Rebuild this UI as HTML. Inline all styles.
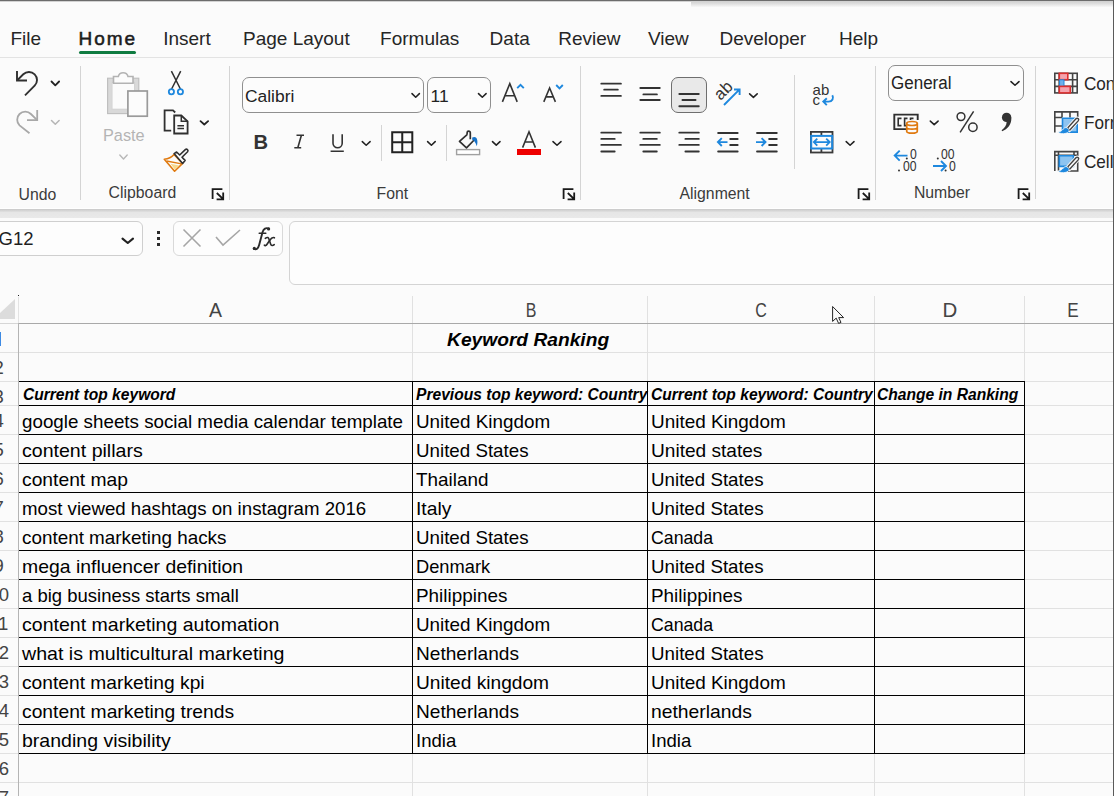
<!DOCTYPE html>
<html><head><meta charset="utf-8"><style>
html,body{margin:0;padding:0;}
body{width:1114px;height:796px;overflow:hidden;position:relative;font-family:"Liberation Sans", sans-serif;background:#fbfbfb;}
div{box-sizing:border-box}
</style></head><body>
<div style="position:absolute;left:0px;top:0px;width:1114px;height:209px;background:#fbfbfb"></div><div style="position:absolute;left:0px;top:0px;width:1114px;height:1px;background:#6c6c6c"></div><div style="position:absolute;left:0px;top:1px;width:1114px;height:1px;background:#d2d2d2"></div><div style="position:absolute;left:691px;top:1px;width:423px;height:6px;background:linear-gradient(#cfcfcf,#dcdcdc 40%,#f7f7f7)"></div><div style="position:absolute;left:10.4px;top:28.92px;font-size:19px;line-height:1;white-space:nowrap;color:#262626;font-weight:normal;font-style:normal;">File</div><div style="position:absolute;left:163.2px;top:28.92px;font-size:19px;line-height:1;white-space:nowrap;color:#262626;font-weight:normal;font-style:normal;">Insert</div><div style="position:absolute;left:243.0px;top:28.92px;font-size:19px;line-height:1;white-space:nowrap;color:#262626;font-weight:normal;font-style:normal;">Page Layout</div><div style="position:absolute;left:380.1px;top:28.92px;font-size:19px;line-height:1;white-space:nowrap;color:#262626;font-weight:normal;font-style:normal;">Formulas</div><div style="position:absolute;left:489.6px;top:28.92px;font-size:19px;line-height:1;white-space:nowrap;color:#262626;font-weight:normal;font-style:normal;">Data</div><div style="position:absolute;left:558.2px;top:28.92px;font-size:19px;line-height:1;white-space:nowrap;color:#262626;font-weight:normal;font-style:normal;">Review</div><div style="position:absolute;left:648.0px;top:28.92px;font-size:19px;line-height:1;white-space:nowrap;color:#262626;font-weight:normal;font-style:normal;">View</div><div style="position:absolute;left:719.5px;top:28.92px;font-size:19px;line-height:1;white-space:nowrap;color:#262626;font-weight:normal;font-style:normal;">Developer</div><div style="position:absolute;left:839.0px;top:28.92px;font-size:19px;line-height:1;white-space:nowrap;color:#262626;font-weight:normal;font-style:normal;">Help</div><div style="position:absolute;left:78.6px;top:28.92px;font-size:19px;line-height:1;white-space:nowrap;color:#1c1c1c;font-weight:normal;font-style:normal;letter-spacing:1.9px;-webkit-text-stroke:0.55px #1c1c1c">Home</div><div style="position:absolute;left:79px;top:51px;width:57px;height:3px;background:#107c41;border-radius:2px"></div><div style="position:absolute;left:0px;top:57px;width:1114px;height:1px;background:#e3e3e3"></div><div style="position:absolute;left:0px;top:208px;width:1114px;height:1px;background:#ffffff"></div><div style="position:absolute;left:0px;top:209px;width:1114px;height:9px;background:linear-gradient(#c9c9c9 0px,#d8d8d8 2px,#e6e6e6 3.5px,#e9e9e9 9px)"></div><div style="position:absolute;left:0px;top:218px;width:1114px;height:105px;background:#fbfbfb"></div><div style="position:absolute;left:80px;top:66px;width:1px;height:134px;background:#d4d4d4"></div><div style="position:absolute;left:229px;top:66px;width:1px;height:134px;background:#d4d4d4"></div><div style="position:absolute;left:580px;top:66px;width:1px;height:134px;background:#d4d4d4"></div><div style="position:absolute;left:875px;top:66px;width:1px;height:134px;background:#d4d4d4"></div><div style="position:absolute;left:1035px;top:66px;width:1px;height:133px;background:#d4d4d4"></div><div style="position:absolute;left:18.5px;top:186.63px;font-size:15.8px;line-height:1;white-space:nowrap;color:#3b3b3b;font-weight:normal;font-style:normal;">Undo</div><div style="position:absolute;left:108.6px;top:185.13px;font-size:15.8px;line-height:1;white-space:nowrap;color:#3b3b3b;font-weight:normal;font-style:normal;">Clipboard</div><div style="position:absolute;left:376.6px;top:185.63px;font-size:15.8px;line-height:1;white-space:nowrap;color:#3b3b3b;font-weight:normal;font-style:normal;">Font</div><div style="position:absolute;left:679.5px;top:185.63px;font-size:15.8px;line-height:1;white-space:nowrap;color:#3b3b3b;font-weight:normal;font-style:normal;">Alignment</div><div style="position:absolute;left:913.9px;top:185.33px;font-size:15.8px;line-height:1;white-space:nowrap;color:#3b3b3b;font-weight:normal;font-style:normal;">Number</div><div style="position:absolute;left:103px;top:126.90px;font-size:16.3px;line-height:1;white-space:nowrap;color:#b4b4b4;font-weight:normal;font-style:normal;">Paste</div><div style="position:absolute;left:242px;top:77px;width:182px;height:36px;background:#fcfcfc;border:1px solid #8f8f8f;border-radius:7px"></div><div style="position:absolute;left:245px;top:87.87px;font-size:17.4px;line-height:1;white-space:nowrap;color:#222;font-weight:normal;font-style:normal;">Calibri</div><div style="position:absolute;left:427px;top:77px;width:64px;height:36px;background:#fcfcfc;border:1px solid #8f8f8f;border-radius:7px"></div><div style="position:absolute;left:430.5px;top:87.87px;font-size:17.4px;line-height:1;white-space:nowrap;color:#222;font-weight:normal;font-style:normal;">11</div><div style="position:absolute;left:253.6px;top:131.70px;font-size:20.2px;line-height:1;white-space:nowrap;color:#333;font-weight:bold;font-style:normal;">B</div><div style="position:absolute;left:381px;top:125px;width:1px;height:36px;background:#d4d4d4"></div><div style="position:absolute;left:446px;top:125px;width:1px;height:36px;background:#d4d4d4"></div><div style="position:absolute;left:517px;top:149px;width:24px;height:6px;background:#ee0000"></div><div style="position:absolute;left:671px;top:77px;width:36px;height:36px;background:#e9e9e9;border:1px solid #6e6e6e;border-radius:7px"></div><div style="position:absolute;left:794px;top:75px;width:1px;height:94px;background:#d4d4d4"></div><div style="position:absolute;left:812.6px;top:81.60px;font-size:15px;line-height:1;white-space:nowrap;color:#333;font-weight:normal;font-style:normal;">ab</div><div style="position:absolute;left:812.6px;top:92.40px;font-size:15px;line-height:1;white-space:nowrap;color:#333;font-weight:normal;font-style:normal;">c</div><div style="position:absolute;left:888px;top:65px;width:136px;height:36px;background:#fcfcfc;border:1px solid #8f8f8f;border-radius:7px"></div><div style="position:absolute;left:891px;top:74.09px;font-size:18.8px;line-height:1;white-space:nowrap;color:#222;font-weight:normal;font-style:normal;transform:scaleX(0.905);transform-origin:0 0">General</div><div style="position:absolute;left:909.7px;top:147.28px;font-size:14.2px;line-height:1;white-space:nowrap;color:#333;transform:scaleX(0.86);transform-origin:0 0">0</div><div style="position:absolute;left:902.6px;top:159.48px;font-size:14.2px;line-height:1;white-space:nowrap;color:#333;transform:scaleX(0.86);transform-origin:0 0">00</div><div style="position:absolute;left:941px;top:147.28px;font-size:14.2px;line-height:1;white-space:nowrap;color:#333;transform:scaleX(0.86);transform-origin:0 0">00</div><div style="position:absolute;left:949.1px;top:159.48px;font-size:14.2px;line-height:1;white-space:nowrap;color:#333;transform:scaleX(0.86);transform-origin:0 0">0</div><div style="position:absolute;left:1084.2px;top:73.62px;font-size:19px;line-height:1;white-space:nowrap;color:#262626;font-weight:normal;font-style:normal;transform:scaleX(0.9);transform-origin:0 0">Conditional</div><div style="position:absolute;left:1084.2px;top:112.92px;font-size:19px;line-height:1;white-space:nowrap;color:#262626;font-weight:normal;font-style:normal;transform:scaleX(0.9);transform-origin:0 0">Format as</div><div style="position:absolute;left:1084.2px;top:151.52px;font-size:19px;line-height:1;white-space:nowrap;color:#262626;font-weight:normal;font-style:normal;transform:scaleX(0.9);transform-origin:0 0">Cell Styles</div><div style="position:absolute;left:-10px;top:221px;width:153px;height:35px;background:#fdfdfd;border:1px solid #cfcfcf;border-radius:6px"></div><div style="position:absolute;left:-1.5px;top:230.14px;font-size:18.5px;line-height:1;white-space:nowrap;color:#1f1f1f;font-weight:normal;font-style:normal;">G12</div><div style="position:absolute;left:156.6px;top:231.2px;width:3px;height:3px;background:#2a2a2a"></div><div style="position:absolute;left:156.6px;top:237.2px;width:3px;height:3px;background:#2a2a2a"></div><div style="position:absolute;left:156.6px;top:243.1px;width:3px;height:3px;background:#2a2a2a"></div><div style="position:absolute;left:173px;top:221px;width:110px;height:35px;background:#fdfdfd;border:1px solid #d9d9d9;border-radius:6px"></div><div style="position:absolute;left:289px;top:221px;width:840px;height:64px;background:#fdfdfd;border:1px solid #d4d4d4;border-radius:6px"></div><div style="position:absolute;left:0px;top:323px;width:1114px;height:473px;background:#fbfbfb"></div><div style="position:absolute;left:0px;top:352px;width:1114px;height:1px;background:#e1e1e1"></div><div style="position:absolute;left:0px;top:381px;width:1114px;height:1px;background:#e1e1e1"></div><div style="position:absolute;left:0px;top:405px;width:1114px;height:1px;background:#e1e1e1"></div><div style="position:absolute;left:0px;top:434px;width:1114px;height:1px;background:#e1e1e1"></div><div style="position:absolute;left:0px;top:463px;width:1114px;height:1px;background:#e1e1e1"></div><div style="position:absolute;left:0px;top:492px;width:1114px;height:1px;background:#e1e1e1"></div><div style="position:absolute;left:0px;top:521px;width:1114px;height:1px;background:#e1e1e1"></div><div style="position:absolute;left:0px;top:550px;width:1114px;height:1px;background:#e1e1e1"></div><div style="position:absolute;left:0px;top:579px;width:1114px;height:1px;background:#e1e1e1"></div><div style="position:absolute;left:0px;top:608px;width:1114px;height:1px;background:#e1e1e1"></div><div style="position:absolute;left:0px;top:637px;width:1114px;height:1px;background:#e1e1e1"></div><div style="position:absolute;left:0px;top:666px;width:1114px;height:1px;background:#e1e1e1"></div><div style="position:absolute;left:0px;top:695px;width:1114px;height:1px;background:#e1e1e1"></div><div style="position:absolute;left:0px;top:724px;width:1114px;height:1px;background:#e1e1e1"></div><div style="position:absolute;left:0px;top:753px;width:1114px;height:1px;background:#e1e1e1"></div><div style="position:absolute;left:0px;top:782px;width:1114px;height:1px;background:#e1e1e1"></div><div style="position:absolute;left:0px;top:811px;width:1114px;height:1px;background:#e1e1e1"></div><div style="position:absolute;left:412px;top:296px;width:1px;height:500px;background:#e1e1e1"></div><div style="position:absolute;left:647px;top:296px;width:1px;height:500px;background:#e1e1e1"></div><div style="position:absolute;left:874px;top:296px;width:1px;height:500px;background:#e1e1e1"></div><div style="position:absolute;left:1024px;top:296px;width:1px;height:500px;background:#e1e1e1"></div><div style="position:absolute;left:19px;top:323px;width:1095px;height:1px;background:#a9a9a9"></div><div style="position:absolute;left:0px;top:323px;width:18px;height:1px;background:#d6d6d6"></div><div style="position:absolute;left:18px;top:297px;width:1px;height:26px;background:#e3e3e3"></div><div style="position:absolute;left:18px;top:323px;width:1px;height:473px;background:#b4b4b4"></div><div style="position:absolute;left:18px;top:295px;width:1px;height:1px;background:#222"></div><div style="position:absolute;left:185.5px;width:60px;text-align:center;top:301.19px;font-size:19.5px;line-height:1;color:#444;transform:scaleX(1.0)">A</div><div style="position:absolute;left:500.6px;width:60px;text-align:center;top:301.19px;font-size:19.5px;line-height:1;color:#444;transform:scaleX(0.82)">B</div><div style="position:absolute;left:730.9px;width:60px;text-align:center;top:301.19px;font-size:19.5px;line-height:1;color:#444;transform:scaleX(0.82)">C</div><div style="position:absolute;left:920px;width:60px;text-align:center;top:301.19px;font-size:19.5px;line-height:1;color:#444;transform:scaleX(1.05)">D</div><div style="position:absolute;left:1043.4px;width:60px;text-align:center;top:301.19px;font-size:19.5px;line-height:1;color:#444;transform:scaleX(0.88)">E</div><div style="position:absolute;left:0px;top:332px;width:1.3px;height:13.6px;background:#3d8ae3"></div><div style="position:absolute;left:-41.3px;width:80px;text-align:center;top:358.74px;font-size:18.5px;line-height:1;color:#444">2</div><div style="position:absolute;left:-41.3px;width:80px;text-align:center;top:387.74px;font-size:18.5px;line-height:1;color:#444">3</div><div style="position:absolute;left:-41.3px;width:80px;text-align:center;top:411.74px;font-size:18.5px;line-height:1;color:#444">4</div><div style="position:absolute;left:-41.3px;width:80px;text-align:center;top:440.74px;font-size:18.5px;line-height:1;color:#444">5</div><div style="position:absolute;left:-41.3px;width:80px;text-align:center;top:469.74px;font-size:18.5px;line-height:1;color:#444">6</div><div style="position:absolute;left:-41.3px;width:80px;text-align:center;top:498.74px;font-size:18.5px;line-height:1;color:#444">7</div><div style="position:absolute;left:-41.3px;width:80px;text-align:center;top:527.74px;font-size:18.5px;line-height:1;color:#444">8</div><div style="position:absolute;left:-41.3px;width:80px;text-align:center;top:556.74px;font-size:18.5px;line-height:1;color:#444">9</div><div style="position:absolute;left:-41.3px;width:80px;text-align:center;top:585.74px;font-size:18.5px;line-height:1;color:#444">10</div><div style="position:absolute;left:-41.3px;width:80px;text-align:center;top:614.74px;font-size:18.5px;line-height:1;color:#444">11</div><div style="position:absolute;left:-41.3px;width:80px;text-align:center;top:643.74px;font-size:18.5px;line-height:1;color:#444">12</div><div style="position:absolute;left:-41.3px;width:80px;text-align:center;top:672.74px;font-size:18.5px;line-height:1;color:#444">13</div><div style="position:absolute;left:-41.3px;width:80px;text-align:center;top:701.74px;font-size:18.5px;line-height:1;color:#444">14</div><div style="position:absolute;left:-41.3px;width:80px;text-align:center;top:730.74px;font-size:18.5px;line-height:1;color:#444">15</div><div style="position:absolute;left:-41.3px;width:80px;text-align:center;top:759.74px;font-size:18.5px;line-height:1;color:#444">16</div><div style="position:absolute;left:-41.3px;width:80px;text-align:center;top:788.74px;font-size:18.5px;line-height:1;color:#444">17</div><div style="position:absolute;left:19px;top:381px;width:1006px;height:1px;background:#000"></div><div style="position:absolute;left:19px;top:405px;width:1006px;height:1px;background:#000"></div><div style="position:absolute;left:19px;top:434px;width:1006px;height:1px;background:#000"></div><div style="position:absolute;left:19px;top:463px;width:1006px;height:1px;background:#000"></div><div style="position:absolute;left:19px;top:492px;width:1006px;height:1px;background:#000"></div><div style="position:absolute;left:19px;top:521px;width:1006px;height:1px;background:#000"></div><div style="position:absolute;left:19px;top:550px;width:1006px;height:1px;background:#000"></div><div style="position:absolute;left:19px;top:579px;width:1006px;height:1px;background:#000"></div><div style="position:absolute;left:19px;top:608px;width:1006px;height:1px;background:#000"></div><div style="position:absolute;left:19px;top:637px;width:1006px;height:1px;background:#000"></div><div style="position:absolute;left:19px;top:666px;width:1006px;height:1px;background:#000"></div><div style="position:absolute;left:19px;top:695px;width:1006px;height:1px;background:#000"></div><div style="position:absolute;left:19px;top:724px;width:1006px;height:1px;background:#000"></div><div style="position:absolute;left:19px;top:753px;width:1006px;height:1px;background:#000"></div><div style="position:absolute;left:412px;top:381px;width:1px;height:373px;background:#000"></div><div style="position:absolute;left:647px;top:381px;width:1px;height:373px;background:#000"></div><div style="position:absolute;left:874px;top:381px;width:1px;height:373px;background:#000"></div><div style="position:absolute;left:1024px;top:381px;width:1px;height:373px;background:#000"></div><div style="position:absolute;left:410.6px;width:235px;text-align:center;top:329.75px;font-size:19.2px;line-height:1;font-weight:bold;font-style:italic;color:#000">Keyword Ranking</div><div style="position:absolute;left:22.9px;top:386.79px;font-size:15.6px;line-height:1;white-space:nowrap;color:#000;font-weight:bold;font-style:italic;">Current top keyword</div><div style="position:absolute;left:416px;top:386.79px;font-size:15.6px;line-height:1;white-space:nowrap;color:#000;font-weight:bold;font-style:italic;">Previous top keyword: Country</div><div style="position:absolute;left:651px;top:386.79px;font-size:15.6px;line-height:1;white-space:nowrap;color:#000;font-weight:bold;font-style:italic;">Current top keyword: Country</div><div style="position:absolute;left:877px;top:386.79px;font-size:15.6px;line-height:1;white-space:nowrap;color:#000;font-weight:bold;font-style:italic;">Change in Ranking</div><div style="position:absolute;left:22px;top:412.42px;font-size:19px;line-height:1;white-space:nowrap;color:#000;font-weight:normal;font-style:normal;transform:scaleX(0.9883);transform-origin:0 0">google sheets social media calendar template</div><div style="position:absolute;left:416px;top:412.42px;font-size:19px;line-height:1;white-space:nowrap;color:#000;font-weight:normal;font-style:normal;transform:scaleX(0.9926);transform-origin:0 0">United Kingdom</div><div style="position:absolute;left:651px;top:412.42px;font-size:19px;line-height:1;white-space:nowrap;color:#000;font-weight:normal;font-style:normal;transform:scaleX(0.9963);transform-origin:0 0">United Kingdom</div><div style="position:absolute;left:22px;top:441.42px;font-size:19px;line-height:1;white-space:nowrap;color:#000;font-weight:normal;font-style:normal;transform:scaleX(1.0299);transform-origin:0 0">content pillars</div><div style="position:absolute;left:416px;top:441.42px;font-size:19px;line-height:1;white-space:nowrap;color:#000;font-weight:normal;font-style:normal;transform:scaleX(0.9868);transform-origin:0 0">United States</div><div style="position:absolute;left:651px;top:441.42px;font-size:19px;line-height:1;white-space:nowrap;color:#000;font-weight:normal;font-style:normal;transform:scaleX(1.0045);transform-origin:0 0">United states</div><div style="position:absolute;left:22px;top:470.42px;font-size:19px;line-height:1;white-space:nowrap;color:#000;font-weight:normal;font-style:normal;transform:scaleX(1.0143);transform-origin:0 0">content map</div><div style="position:absolute;left:416px;top:470.42px;font-size:19px;line-height:1;white-space:nowrap;color:#000;font-weight:normal;font-style:normal;transform:scaleX(0.9932);transform-origin:0 0">Thailand</div><div style="position:absolute;left:651px;top:470.42px;font-size:19px;line-height:1;white-space:nowrap;color:#000;font-weight:normal;font-style:normal;transform:scaleX(0.9868);transform-origin:0 0">United States</div><div style="position:absolute;left:22px;top:499.42px;font-size:19px;line-height:1;white-space:nowrap;color:#000;font-weight:normal;font-style:normal;transform:scaleX(0.9815);transform-origin:0 0">most viewed hashtags on instagram 2016</div><div style="position:absolute;left:416px;top:499.42px;font-size:19px;line-height:1;white-space:nowrap;color:#000;font-weight:normal;font-style:normal;transform:scaleX(1.0143);transform-origin:0 0">Italy</div><div style="position:absolute;left:651px;top:499.42px;font-size:19px;line-height:1;white-space:nowrap;color:#000;font-weight:normal;font-style:normal;transform:scaleX(0.9868);transform-origin:0 0">United States</div><div style="position:absolute;left:22px;top:528.42px;font-size:19px;line-height:1;white-space:nowrap;color:#000;font-weight:normal;font-style:normal;transform:scaleX(0.9927);transform-origin:0 0">content marketing hacks</div><div style="position:absolute;left:416px;top:528.42px;font-size:19px;line-height:1;white-space:nowrap;color:#000;font-weight:normal;font-style:normal;transform:scaleX(0.9868);transform-origin:0 0">United States</div><div style="position:absolute;left:651px;top:528.42px;font-size:19px;line-height:1;white-space:nowrap;color:#000;font-weight:normal;font-style:normal;transform:scaleX(0.9328);transform-origin:0 0">Canada</div><div style="position:absolute;left:22px;top:557.42px;font-size:19px;line-height:1;white-space:nowrap;color:#000;font-weight:normal;font-style:normal;transform:scaleX(1.0208);transform-origin:0 0">mega influencer definition</div><div style="position:absolute;left:416px;top:557.42px;font-size:19px;line-height:1;white-space:nowrap;color:#000;font-weight:normal;font-style:normal;transform:scaleX(0.9615);transform-origin:0 0">Denmark</div><div style="position:absolute;left:651px;top:557.42px;font-size:19px;line-height:1;white-space:nowrap;color:#000;font-weight:normal;font-style:normal;transform:scaleX(0.9868);transform-origin:0 0">United States</div><div style="position:absolute;left:22px;top:586.42px;font-size:19px;line-height:1;white-space:nowrap;color:#000;font-weight:normal;font-style:normal;transform:scaleX(0.9731);transform-origin:0 0">a big business starts small</div><div style="position:absolute;left:416px;top:586.42px;font-size:19px;line-height:1;white-space:nowrap;color:#000;font-weight:normal;font-style:normal;transform:scaleX(0.9946);transform-origin:0 0">Philippines</div><div style="position:absolute;left:651px;top:586.42px;font-size:19px;line-height:1;white-space:nowrap;color:#000;font-weight:normal;font-style:normal;transform:scaleX(0.9946);transform-origin:0 0">Philippines</div><div style="position:absolute;left:22px;top:615.42px;font-size:19px;line-height:1;white-space:nowrap;color:#000;font-weight:normal;font-style:normal;transform:scaleX(1.0280);transform-origin:0 0">content marketing automation</div><div style="position:absolute;left:416px;top:615.42px;font-size:19px;line-height:1;white-space:nowrap;color:#000;font-weight:normal;font-style:normal;transform:scaleX(0.9926);transform-origin:0 0">United Kingdom</div><div style="position:absolute;left:651px;top:615.42px;font-size:19px;line-height:1;white-space:nowrap;color:#000;font-weight:normal;font-style:normal;transform:scaleX(0.9328);transform-origin:0 0">Canada</div><div style="position:absolute;left:22px;top:644.42px;font-size:19px;line-height:1;white-space:nowrap;color:#000;font-weight:normal;font-style:normal;transform:scaleX(1.0315);transform-origin:0 0">what is multicultural marketing</div><div style="position:absolute;left:416px;top:644.42px;font-size:19px;line-height:1;white-space:nowrap;color:#000;font-weight:normal;font-style:normal;transform:scaleX(1.0049);transform-origin:0 0">Netherlands</div><div style="position:absolute;left:651px;top:644.42px;font-size:19px;line-height:1;white-space:nowrap;color:#000;font-weight:normal;font-style:normal;transform:scaleX(0.9868);transform-origin:0 0">United States</div><div style="position:absolute;left:22px;top:673.42px;font-size:19px;line-height:1;white-space:nowrap;color:#000;font-weight:normal;font-style:normal;transform:scaleX(1.0110);transform-origin:0 0">content marketing kpi</div><div style="position:absolute;left:416px;top:673.42px;font-size:19px;line-height:1;white-space:nowrap;color:#000;font-weight:normal;font-style:normal;transform:scaleX(1.0076);transform-origin:0 0">United kingdom</div><div style="position:absolute;left:651px;top:673.42px;font-size:19px;line-height:1;white-space:nowrap;color:#000;font-weight:normal;font-style:normal;transform:scaleX(0.9963);transform-origin:0 0">United Kingdom</div><div style="position:absolute;left:22px;top:702.42px;font-size:19px;line-height:1;white-space:nowrap;color:#000;font-weight:normal;font-style:normal;transform:scaleX(1.0144);transform-origin:0 0">content marketing trends</div><div style="position:absolute;left:416px;top:702.42px;font-size:19px;line-height:1;white-space:nowrap;color:#000;font-weight:normal;font-style:normal;transform:scaleX(1.0049);transform-origin:0 0">Netherlands</div><div style="position:absolute;left:651px;top:702.42px;font-size:19px;line-height:1;white-space:nowrap;color:#000;font-weight:normal;font-style:normal;transform:scaleX(1.0152);transform-origin:0 0">netherlands</div><div style="position:absolute;left:22px;top:731.42px;font-size:19px;line-height:1;white-space:nowrap;color:#000;font-weight:normal;font-style:normal;transform:scaleX(1.0276);transform-origin:0 0">branding visibility</div><div style="position:absolute;left:416px;top:731.42px;font-size:19px;line-height:1;white-space:nowrap;color:#000;font-weight:normal;font-style:normal;transform:scaleX(0.9762);transform-origin:0 0">India</div><div style="position:absolute;left:651px;top:731.42px;font-size:19px;line-height:1;white-space:nowrap;color:#000;font-weight:normal;font-style:normal;transform:scaleX(0.9762);transform-origin:0 0">India</div><div style="position:absolute;left:1113px;top:0px;width:1px;height:796px;background:#5a5a5a"></div>
<svg style="position:absolute;left:0;top:0" width="1114" height="796" viewBox="0 0 1114 796"><path d="M212.6 199V189.1H222.4" fill="none" stroke="#1a1a1a" stroke-width="1.8"/><path d="M216.8 193L223.2 199.2M223.2 192.4V199.4H216.6" fill="none" stroke="#1a1a1a" stroke-width="1.8"/><path d="M563.6 199V189.1H573.4" fill="none" stroke="#1a1a1a" stroke-width="1.8"/><path d="M567.8 193L574.2 199.2M574.2 192.4V199.4H567.6" fill="none" stroke="#1a1a1a" stroke-width="1.8"/><path d="M858.6 199V189.1H868.4" fill="none" stroke="#1a1a1a" stroke-width="1.8"/><path d="M862.8 193L869.2 199.2M869.2 192.4V199.4H862.6" fill="none" stroke="#1a1a1a" stroke-width="1.8"/><path d="M1018.6 199V189.1H1028.4" fill="none" stroke="#1a1a1a" stroke-width="1.8"/><path d="M1022.8 193L1029.2 199.2M1029.2 192.4V199.4H1022.6" fill="none" stroke="#1a1a1a" stroke-width="1.8"/><g fill="none" stroke="#303030" stroke-width="1.9"><path d="M17 71V80.5H27"/><path d="M17.3 80.2L23.3 74.3A8 8 0 0 1 34.66 85.66L25 95.3"/></g><path d="M51.5 81.50L55.3 85.30L59.1 81.50" fill="none" stroke="#222" stroke-width="1.8" stroke-linecap="round" stroke-linejoin="round"/><g fill="none" stroke="#a8a8a8" stroke-width="1.8"><path d="M37.2 110V120.2H27"/><path d="M36.9 119.9L30.9 114A8 8 0 0 0 19.55 125.35L29.5 133.3"/></g><path d="M51.5 120.50L55.3 124.30L59.1 120.50" fill="none" stroke="#b5b5b5" stroke-width="1.5" stroke-linecap="round" stroke-linejoin="round"/><rect x="109.8" y="80.3" width="27" height="31" fill="none" stroke="#d9d9d9" stroke-width="4"/><rect x="107.6" y="78.2" width="31.2" height="35.4" fill="none" stroke="#bdbdbd" stroke-width="1.1"/><rect x="112" y="82.4" width="22.6" height="26.8" fill="none" stroke="#cfcfcf" stroke-width="1"/><path d="M113.5 76.5H118.3A5 5 0 0 1 128 76.5H133V83.3H113.5Z" fill="#fcfcfc" stroke="#b3b3b3" stroke-width="1.6"/><rect x="127.9" y="91" width="19.4" height="25.2" fill="#fcfcfc" stroke="#9a9a9a" stroke-width="1.7"/><path d="M119.8 155.00L123.5 159.00L127.2 155.00" fill="none" stroke="#b8b8b8" stroke-width="1.4" stroke-linecap="round" stroke-linejoin="round"/><path d="M171.4 71.2L180.4 89M180.7 71.2L171.6 89" stroke="#303030" stroke-width="1.5" fill="none"/><circle cx="171.4" cy="91.8" r="2.6" fill="#fbfbfb" stroke="#1e88de" stroke-width="1.8"/><circle cx="180.4" cy="91.8" r="2.6" fill="#fbfbfb" stroke="#1e88de" stroke-width="1.8"/><path d="M171.2 130.6H164.6V110.4H173L175.2 112.5" fill="none" stroke="#303030" stroke-width="1.8"/><path d="M174.2 115.5H181.3L187.6 121.3V133.5H174.2Z" fill="#fbfbfb" stroke="#303030" stroke-width="1.8"/><path d="M181.3 115.5V121.3H187.6M177.4 125.7H184M177.4 128.6H184" fill="none" stroke="#303030" stroke-width="1.5"/><path d="M200.5 121.10L204.3 124.46L208.1 121.10" fill="none" stroke="#222" stroke-width="1.8" stroke-linecap="round" stroke-linejoin="round"/><path d="M174 154.5C171 158 167 159 164.3 159.3L174.6 171.2L182.6 163.4Z" fill="#fcfcfc" stroke="#e07a10" stroke-width="1.6" stroke-linejoin="round"/><path d="M166.5 161L181.6 163.8" fill="none" stroke="#e07a10" stroke-width="1.3"/><path d="M170.5 163.8L179.2 165.4L174.8 169.6Z" fill="#f7d98e"/><path d="M174.1 153.6L176.6 152L179.7 155L185.3 149.6A1.6 1.6 0 0 1 187.6 151.8L182 157.3L185.1 160.4L182.6 163.4Z" fill="#fbfbfb" stroke="#303030" stroke-width="1.6" stroke-linejoin="round"/><path d="M412 93.60L415.7 97.20L419.4 93.60" fill="none" stroke="#222" stroke-width="1.55" stroke-linecap="round" stroke-linejoin="round"/><path d="M478.5 93.60L482.3 97.20L486.1 93.60" fill="none" stroke="#222" stroke-width="1.55" stroke-linecap="round" stroke-linejoin="round"/><path d="M502.4 101.9L509.8 83.6L517.2 101.9M505.2 95.8H514.4" fill="none" stroke="#333" stroke-width="1.6"/><path d="M517.2 88.2L520.5 84.9L523.8 88.2" fill="none" stroke="#1e88de" stroke-width="1.9"/><path d="M543.8 101.9L549.6 88L555.4 101.9M545.9 96.9H553.3" fill="none" stroke="#333" stroke-width="1.6"/><path d="M556.2 85L559.5 88.3L562.8 85" fill="none" stroke="#1e88de" stroke-width="1.9"/><path d="M296.5 135.3H304M301.4 135.3L297.8 147.7M294.3 147.7H301.2" fill="none" stroke="#333" stroke-width="1.6"/><path d="M333 134.2V143.2A4.6 4.6 0 0 0 342.2 143.2V134.2M330.6 151.3H343.8" fill="none" stroke="#333" stroke-width="1.6"/><path d="M362.3 141.60L366.2 145.28L370.1 141.60" fill="none" stroke="#222" stroke-width="1.55" stroke-linecap="round" stroke-linejoin="round"/><path d="M392.2 132.3H412.3V152.3H392.2ZM402.25 132.3V152.3M392.2 142.3H412.3" fill="none" stroke="#222" stroke-width="2"/><path d="M427.6 141.60L431.40000000000003 145.28L435.20000000000005 141.60" fill="none" stroke="#222" stroke-width="1.55" stroke-linecap="round" stroke-linejoin="round"/><path d="M467.1 134.7L459.5 141.4L466.5 147.9L474.6 139.5" fill="none" stroke="#303030" stroke-width="1.7" stroke-linejoin="round"/><path d="M467.1 134.7V132.7A1.6 1.6 0 0 1 470.3 132.7V139.3" fill="none" stroke="#303030" stroke-width="1.7"/><path d="M472.2 137.6C475.8 135.4 478.8 138.8 476.8 146.2C475.6 142.6 474.4 140.6 472.2 139.8Z" fill="#1672c8"/><rect x="456.6" y="149.6" width="23" height="5" fill="#fff" stroke="#a0a0a0" stroke-width="1.4"/><path d="M492.5 141.60L496.25 145.12L500.0 141.60" fill="none" stroke="#222" stroke-width="1.55" stroke-linecap="round" stroke-linejoin="round"/><path d="M522.6 147.6L529 131.8L535.4 147.6M524.9 142H533.1" fill="none" stroke="#333" stroke-width="1.6"/><path d="M553 141.60L557.0 145.28L561 141.60" fill="none" stroke="#222" stroke-width="1.55" stroke-linecap="round" stroke-linejoin="round"/><rect x="600.4" y="82.7" width="21.4" height="1.9" rx="0.9" fill="#333"/><rect x="603.3" y="88.7" width="15.4" height="1.9" rx="0.9" fill="#333"/><rect x="600.4" y="94.9" width="21.4" height="1.9" rx="0.9" fill="#333"/><rect x="639.4" y="87" width="21.3" height="1.9" rx="0.9" fill="#333"/><rect x="642.5" y="93.4" width="15.3" height="1.9" rx="0.9" fill="#333"/><rect x="639.4" y="99.1" width="21.3" height="1.9" rx="0.9" fill="#333"/><rect x="678.4" y="93.1" width="21.3" height="1.9" rx="0.9" fill="#333"/><rect x="681.5" y="99.1" width="15.0" height="1.9" rx="0.9" fill="#333"/><rect x="678.4" y="105.3" width="21.3" height="1.9" rx="0.9" fill="#333"/><rect x="600.4" y="131.7" width="21.4" height="1.9" rx="0.9" fill="#333"/><rect x="600.4" y="137.9" width="15.2" height="1.9" rx="0.9" fill="#333"/><rect x="600.4" y="143.9" width="21.4" height="1.9" rx="0.9" fill="#333"/><rect x="600.4" y="150.5" width="15.2" height="1.9" rx="0.9" fill="#333"/><rect x="639.4" y="131.7" width="21.3" height="1.9" rx="0.9" fill="#333"/><rect x="642.4" y="137.9" width="15.3" height="1.9" rx="0.9" fill="#333"/><rect x="639.4" y="143.9" width="21.3" height="1.9" rx="0.9" fill="#333"/><rect x="642.4" y="150.5" width="15.3" height="1.9" rx="0.9" fill="#333"/><rect x="678.4" y="131.7" width="21.3" height="1.9" rx="0.9" fill="#333"/><rect x="684.5" y="137.9" width="15.2" height="1.9" rx="0.9" fill="#333"/><rect x="678.4" y="143.9" width="21.3" height="1.9" rx="0.9" fill="#333"/><rect x="684.5" y="150.5" width="15.2" height="1.9" rx="0.9" fill="#333"/><rect x="717.2" y="132.1" width="21.4" height="1.9" rx="0.9" fill="#333"/><rect x="729.3" y="138.1" width="9.3" height="1.9" rx="0.9" fill="#333"/><rect x="729.3" y="144.1" width="9.3" height="1.9" rx="0.9" fill="#333"/><rect x="717.2" y="150.5" width="21.4" height="1.9" rx="0.9" fill="#333"/><rect x="756.1" y="132.1" width="21.6" height="1.9" rx="0.9" fill="#333"/><rect x="768.2" y="138.1" width="9.5" height="1.9" rx="0.9" fill="#333"/><rect x="768.2" y="144.1" width="9.5" height="1.9" rx="0.9" fill="#333"/><rect x="756.1" y="150.5" width="21.6" height="1.9" rx="0.9" fill="#333"/><path d="M718 142.1H727.5M721.8 138.2L717.9 142.1L721.8 146" fill="none" stroke="#1e88de" stroke-width="1.9"/><path d="M765.6 142.1H756M761.6 138.2L765.5 142.1L761.6 146" fill="none" stroke="#1e88de" stroke-width="1.9"/><path d="M724 105L739.3 89.6M734 89.5H739.6V95" fill="none" stroke="#1e88de" stroke-width="1.9"/><text x="0" y="0" transform="translate(720.6 100.9) rotate(-45)" font-family="Liberation Sans" font-size="16.8" fill="#333">ab</text><path d="M749.6 93.90L753.4 97.42L757.2 93.90" fill="none" stroke="#222" stroke-width="1.55" stroke-linecap="round" stroke-linejoin="round"/><path d="M832.3 95.2C834 98 832.5 101.6 828.5 101.6H823.5M826.8 98.2L823.3 101.6L826.8 105.2" fill="none" stroke="#1e88de" stroke-width="1.9"/><rect x="810.9" y="131.9" width="21.6" height="20.6" fill="none" stroke="#3a3a3a" stroke-width="1.8"/><path d="M821.4 131.9V136M821.4 148.5V152.5" stroke="#3a3a3a" stroke-width="1.8"/><rect x="811.2" y="135.9" width="21" height="12.6" fill="none" stroke="#1e88de" stroke-width="2"/><path d="M814 142.1H829.5M817.3 138.6L813.8 142.1L817.3 145.6M826.2 138.6L829.7 142.1L826.2 145.6" fill="none" stroke="#1e88de" stroke-width="1.8"/><path d="M846.2 141.60L850.1 145.28L854.0 141.60" fill="none" stroke="#222" stroke-width="1.55" stroke-linecap="round" stroke-linejoin="round"/><path d="M1011 81.60L1015.0 85.28L1019 81.60" fill="none" stroke="#222" stroke-width="1.55" stroke-linecap="round" stroke-linejoin="round"/><path d="M906 129.1H894.3V114.6H917.7V120" fill="none" stroke="#303030" stroke-width="1.9"/><path d="M901.5 118.4H898.2V125.6H901.5M907.5 118.4H904.6V125.6H906.5M913.5 118.4H910.5V120" fill="none" stroke="#303030" stroke-width="1.6"/><ellipse cx="912" cy="123.5" rx="5.3" ry="2" fill="#fbfbfb" stroke="#e07a10" stroke-width="1.7"/><path d="M906.7 123.5V131.2C906.7 133.8 917.3 133.8 917.3 131.2V123.5M906.7 127.3C906.7 129.7 917.3 129.7 917.3 127.3" fill="none" stroke="#e07a10" stroke-width="1.7"/><path d="M930.3 121.10L934.1999999999999 124.62L938.0999999999999 121.10" fill="none" stroke="#222" stroke-width="1.55" stroke-linecap="round" stroke-linejoin="round"/><circle cx="961" cy="116.6" r="3.9" fill="none" stroke="#333" stroke-width="1.5"/><circle cx="972.9" cy="127.3" r="4.2" fill="none" stroke="#333" stroke-width="1.5"/><path d="M973.6 111.3L960.1 132.3" stroke="#333" stroke-width="1.5"/><circle cx="1006.6" cy="117.4" r="4.7" fill="#333"/><path d="M1011.3 117.6C1011.8 124.5 1007.5 129.3 1002.2 131.2L1001.6 130.2C1005 127.8 1006.6 125 1006.6 122.1Z" fill="#333"/><path d="M894.8 155.6H907.5M899.7 150.6L894.7 155.6L899.7 160.6" fill="none" stroke="#1e88de" stroke-width="1.9"/><path d="M933 166H946.2M941 161L946 166L941 171" fill="none" stroke="#1e88de" stroke-width="1.9"/><circle cx="906.8" cy="158.4" r="1" fill="#333"/><circle cx="899" cy="170.6" r="1" fill="#333"/><circle cx="937.8" cy="158.4" r="1" fill="#333"/><circle cx="945.6" cy="170.6" r="1" fill="#333"/><g fill="none" stroke="#444" stroke-width="1.6"><rect x="1054.8" y="73.3" width="22.4" height="19.6"/><path d="M1054.8 79.8H1077.2M1054.8 86.4H1077.2M1059.2 73.3V92.9M1072.6 73.3V92.9"/></g><rect x="1059.3" y="73.3" width="8.5" height="6.4" fill="#f4a3ad" stroke="#dc2e2e" stroke-width="1.6"/><rect x="1059.6" y="79.8" width="4.4" height="6.6" fill="#6fb0ea" stroke="#1e88de" stroke-width="1"/><rect x="1059.3" y="86.4" width="11" height="6.5" fill="#f4a3ad" stroke="#dc2e2e" stroke-width="1.6"/><g fill="none" stroke="#444" stroke-width="1.6"><path d="M1054.8 132.4V111.9H1077.7V117M1054.8 117.5H1062M1054.8 126H1062M1062 111.9V117.5M1070 111.9V117.5"/></g><path d="M1062.5 118.2H1077.2V132.1H1062.5Z" fill="#8ec4f0" stroke="#1e88de" stroke-width="1.6"/><path d="M1076.2 118.6A1.5 1.5 0 0 1 1078.4 120.6L1069.6 130.2L1067.4 128.2Z" fill="#fbfbfb" stroke="#fcfcfc" stroke-width="3.2"/><path d="M1076.2 118.6A1.5 1.5 0 0 1 1078.4 120.6L1069.6 130.2L1067.4 128.2Z" fill="#fbfbfb" stroke="#444" stroke-width="1.4"/><path d="M1067 127.8C1070 129.5 1070 132 1066 133.3C1063 134.2 1059.5 133.5 1057.6 132C1060.5 131.8 1062 130.5 1063.3 129C1064.5 127.6 1066 127.3 1067 127.8Z" fill="#1e88de" stroke="#fcfcfc" stroke-width="0.8"/><g fill="none" stroke="#444" stroke-width="1.6"><path d="M1054.8 171V151.6H1077.7V171H1068M1054.8 155.2H1077.7M1058.5 151.6V171M1074 151.6V156"/></g><path d="M1059.3 155.8H1073.4V166.4H1059.3Z" fill="#8ec4f0" stroke="#1e88de" stroke-width="1.6"/><path d="M1076.2 157.6A1.5 1.5 0 0 1 1078.4 159.6L1069.6 169.2L1067.4 167.2Z" fill="#fbfbfb" stroke="#fcfcfc" stroke-width="3.2"/><path d="M1076.2 157.6A1.5 1.5 0 0 1 1078.4 159.6L1069.6 169.2L1067.4 167.2Z" fill="#fbfbfb" stroke="#444" stroke-width="1.4"/><path d="M1067 166.8C1070 168.5 1070 171 1066 172.3C1063 173.2 1059.5 172.5 1057.6 171C1060.5 170.8 1062 169.5 1063.3 168C1064.5 166.6 1066 166.3 1067 166.8Z" fill="#1e88de" stroke="#fcfcfc" stroke-width="0.8"/><path d="M122.5 238.60L127.75 243.00L133.0 238.60" fill="none" stroke="#222" stroke-width="2.1" stroke-linecap="round" stroke-linejoin="round"/><path d="M183.5 229.5L200.5 246.5M200.5 229.5L183.5 246.5" stroke="#a6a6a6" stroke-width="1.6"/><path d="M216 237L223 245L240 230" fill="none" stroke="#a6a6a6" stroke-width="1.6"/><g fill="none" stroke="#2b2b2b" stroke-linecap="round"><path d="M254 248.8C256.2 250.4 258.2 248.6 259.2 244.8L262.6 232C263.6 228.8 266 227.3 268.6 228.6" stroke-width="1.9"/><path d="M259.2 233.2H265.8" stroke-width="1.5"/><path d="M265.3 238.3C267.5 236.6 268.6 237.6 269.2 239.8L270.6 244C271.2 245.8 272.8 246 274.2 244.6" stroke-width="1.6"/><path d="M274.4 237.8C272.6 236.8 271 238.4 269.6 240.5L267.2 244C266.2 245.6 265 246 264.4 245.2" stroke-width="1.6"/></g><circle cx="254.3" cy="248.4" r="1.6" fill="#2b2b2b"/><circle cx="268.6" cy="228.9" r="1.6" fill="#2b2b2b"/><path d="M15 299V319H0V313Z" fill="#dcdcdc"/><path d="M832.6 306.5V321.4L836.2 318.1L838.6 323.4L841 322.4L838.7 317.6H843.6Z" fill="#fbfbfb" stroke="#1a1a1a" stroke-width="0.95" stroke-linejoin="miter"/></svg>
</body></html>
